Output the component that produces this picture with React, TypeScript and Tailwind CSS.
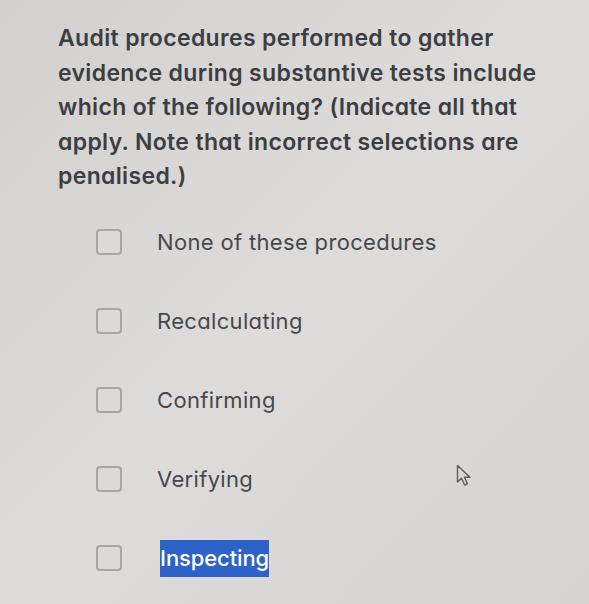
export default function App() {
  const options = [
    "None of these procedures",
    "Recalculating",
    "Confirming",
    "Verifying",
    "Inspecting",
  ];

  return (
    <div
      className="relative w-[589px] h-[604px] overflow-hidden bg-gradient-to-br from-[#d3d1cf] via-[#dedcda] to-[#d6d4d2] text-[#3b3e43]"
      style={{ fontFamily: "Inter, 'Noto Sans', sans-serif", fontFeatureSettings: "'cv11'" }}
    >
      {/* Question */}
      <p className="pl-[58px] pr-[40px] pt-[21px] text-[23px] leading-[34.5px] font-semibold tracking-[0.015em]">
        Audit procedures performed to gather evidence during substantive tests include which of the following? (Indicate all that apply. Note that incorrect selections are penalised.)
      </p>

      {/* Options */}
      <ul className="mt-[9px] pl-[96px]">
        {options.map((opt, i) => (
          <li key={opt} className="flex items-center h-[79px]">
            <span className="w-[26px] h-[26px] shrink-0 rounded-[4px] border-2 border-[#a8a6a4] bg-[#dcdad8]"></span>
            <span
              className={`ml-[35px] text-[22px] leading-[37px] ${
                i === 4
                  ? "ml-[38px] bg-[#2d63c8] text-white font-medium tracking-[-0.005em]"
                  : "text-[#45484c] tracking-[0.015em]"
              }`}
            >
              {opt}
            </span>
          </li>
        ))}
      </ul>

      {/* Mouse cursor */}
      <svg
        className="absolute left-[456px] top-[464px]"
        width="18"
        height="24"
        viewBox="0 0 18 24"
        fill="none"
      >
        <path
          d="M1.5 1.5 L1.5 18 L5.5 14.2 L8.6 21 L11.4 19.8 L8.4 13.2 L14 13.2 Z"
          fill="#d8d6d4"
          stroke="#5a5c60"
          strokeWidth="1.4"
          strokeLinejoin="round"
        />
      </svg>
    </div>
  );
}
